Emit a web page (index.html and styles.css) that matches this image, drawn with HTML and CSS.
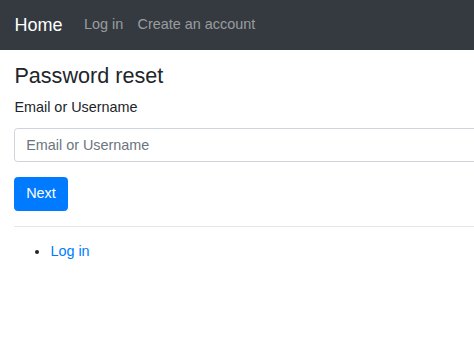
FILE: index.html
```html
<!DOCTYPE html>
<html lang="en">
<head>
    <meta charset="UTF-8">
    <meta name="viewport" content="width=device-width, initial-scale=1.0">
    <title>Password reset</title>
    <link rel="stylesheet" href="styles.css">
</head>
<body>
    <nav class="navbar">
        <a href="#" class="navbar-brand">Home</a>
        <div class="navbar-nav">
            <a href="#" class="nav-link">Log in</a>
            <a href="#" class="nav-link">Create an account</a>
        </div>
    </nav>

    <div class="container">
        <h4 class="page-title">Password reset</h4>
        <form class="reset-form">
            <div class="form-group">
                <label for="login">Email or Username</label>
                <input type="text" id="login" class="form-control" placeholder="Email or Username">
            </div>
            <button type="submit" class="btn-primary">Next</button>
        </form>
        <hr>
        <ul class="links">
            <li><a href="#">Log in</a></li>
        </ul>
    </div>
</body>
</html>
```
FILE: styles.css
```css
html, body {
    overflow-x: hidden;
}
body {
    margin: 0;
    font-family: "Liberation Sans", Arial, sans-serif;
    font-size: 14.4px;
    line-height: 1.5;
    color: #212529;
    background-color: #fff;
}
a {
    color: #007bff;
    text-decoration: none;
}

/* navbar */
.navbar {
    display: flex;
    align-items: center;
    background-color: #343a40;
    padding: 7.2px 14.4px;
}
.navbar-brand {
    color: #fff;
    font-size: 18px;
    line-height: 27px;
    padding: 4.5px 0;
    margin-right: 14.4px;
}
.navbar-nav {
    display: flex;
}
.nav-link {
    color: rgba(255, 255, 255, 0.5);
    padding: 7.2px;
    line-height: 21.6px;
}

/* content */
.container {
    width: 540px;
    padding: 12.3px 14.4px 0;
}
.page-title {
    font-size: 21.6px;
    font-weight: 500;
    line-height: 1.2;
    margin: 0 0 8.6px;
}
.form-group {
    margin-bottom: 14.4px;
}
label {
    display: block;
    margin-bottom: 9.4px;
}
.form-control {
    display: block;
    box-sizing: border-box;
    width: 100%;
    height: 34.2px;
    padding: 5.4px 10.8px;
    font-family: inherit;
    font-size: 14.4px;
    line-height: 1.5;
    color: #495057;
    border: 1px solid #ced4da;
    border-radius: 3.6px;
    margin: 0;
}
.form-control::placeholder {
    color: #6c757d;
}
.btn-primary {
    font-family: inherit;
    font-size: 14.4px;
    line-height: 1.5;
    padding: 5.4px 10.8px;
    color: #fff;
    background-color: #007bff;
    border: 1px solid #007bff;
    border-radius: 3.6px;
    cursor: pointer;
}
hr {
    margin: 14.4px 0;
    border: 0;
    border-top: 1px solid rgba(0, 0, 0, 0.1);
}
.links {
    margin: 0 0 14.4px;
    padding-left: 36px;
}
```
